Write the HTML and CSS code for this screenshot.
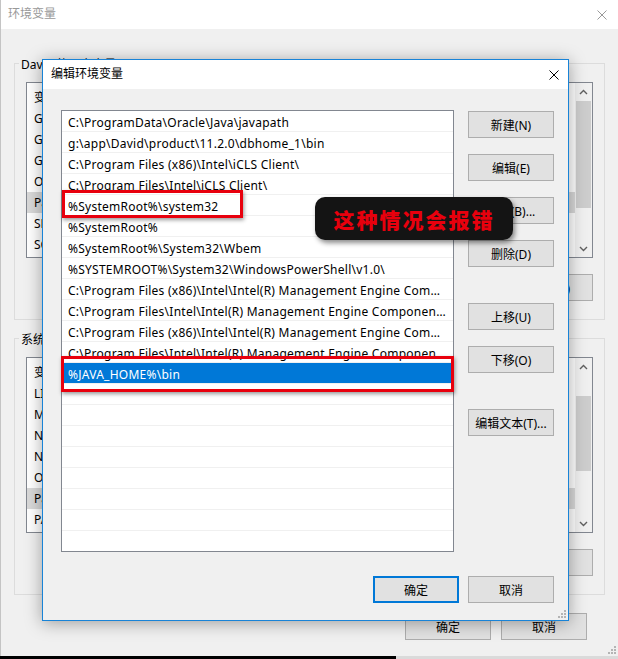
FILE: index.html
```html
<!DOCTYPE html>
<html lang="zh-CN">
<head>
    <meta charset="UTF-8">
    <title>环境变量</title>
    <link rel="stylesheet" href="styles.css">
</head>
<body>
    <div class="desktop">
        <!-- background window: 环境变量 -->
        <div class="window">
            <div class="titlebar inactive">
                <span class="title">环境变量</span>
                <svg class="close-icon" viewBox="0 0 10 10"><path d="M0.5 0.5L9.5 9.5M9.5 0.5L0.5 9.5" stroke="#999" stroke-width="1"/></svg>
            </div>
            <div class="window-body">
                <fieldset class="group">
                    <legend>David 的用户变量(U)</legend>
                    <div class="varlist">
                        <div class="var-rows">
                            <div class="var-row"><span class="var-name">变量</span><span>值</span></div>
                            <div class="var-row"><span class="var-name">GOPATH</span><span>D:\go\work</span></div>
                            <div class="var-row"><span class="var-name">GOROOT</span><span>D:\go</span></div>
                            <div class="var-row"><span class="var-name">GRADLE_HOME</span><span>D:\gradle</span></div>
                            <div class="var-row"><span class="var-name">OneDrive</span><span>C:\Users\David\OneDrive</span></div>
                            <div class="var-row selected"><span class="var-name">Path</span><span>%USERPROFILE%\AppData\Local\Microsoft\WindowsApps;</span></div>
                            <div class="var-row"><span class="var-name">SBT_HOME</span><span>D:\sbt</span></div>
                            <div class="var-row"><span class="var-name">SCALA_HOME</span><span>D:\scala</span></div>
                        </div>
                        <div class="scrollbar">
                            <div class="scroll-arrow"><svg viewBox="0 0 9 6"><path d="M1 5L4.5 1.5L8 5" fill="none" stroke="#606060" stroke-width="1.4"/></svg></div>
                            <div class="scroll-track"><div class="scroll-thumb" style="height: 107px"></div></div>
                            <div class="scroll-arrow"><svg viewBox="0 0 9 6"><path d="M1 1L4.5 4.5L8 1" fill="none" stroke="#606060" stroke-width="1.4"/></svg></div>
                        </div>
                    </div>
                    <div class="group-buttons">
                        <button class="btn">新建(N)...</button>
                        <button class="btn">编辑(E)...</button>
                        <button class="btn">删除(D)</button>
                    </div>
                </fieldset>

                <fieldset class="group group-system">
                    <legend>系统变量(S)</legend>
                    <div class="varlist">
                        <div class="var-rows">
                            <div class="var-row"><span class="var-name">变量</span><span>值</span></div>
                            <div class="var-row"><span class="var-name">LIB</span><span>D:\lib</span></div>
                            <div class="var-row"><span class="var-name">MAVEN_HOME</span><span>D:\maven</span></div>
                            <div class="var-row"><span class="var-name">NUMBER_OF_PROCESSORS</span><span>4</span></div>
                            <div class="var-row"><span class="var-name">NVM_HOME</span><span>D:\nvm</span></div>
                            <div class="var-row"><span class="var-name">OS</span><span>Windows_NT</span></div>
                            <div class="var-row selected"><span class="var-name">Path</span><span>C:\ProgramData\Oracle\Java\javapath;</span></div>
                            <div class="var-row"><span class="var-name">PATHEXT</span><span>.COM;.EXE;.BAT;.CMD</span></div>
                        </div>
                        <div class="scrollbar">
                            <div class="scroll-arrow"><svg viewBox="0 0 9 6"><path d="M1 5L4.5 1.5L8 5" fill="none" stroke="#606060" stroke-width="1.4"/></svg></div>
                            <div class="scroll-track"><div class="scroll-thumb" style="height: 75px; margin-top: 20px"></div></div>
                            <div class="scroll-arrow"><svg viewBox="0 0 9 6"><path d="M1 1L4.5 4.5L8 1" fill="none" stroke="#606060" stroke-width="1.4"/></svg></div>
                        </div>
                    </div>
                    <div class="group-buttons">
                        <button class="btn">新建(W)...</button>
                        <button class="btn">编辑(I)...</button>
                        <button class="btn">删除(L)</button>
                    </div>
                </fieldset>

                <div class="window-footer">
                    <button class="btn">确定</button>
                    <button class="btn">取消</button>
                </div>
            </div>
            <svg class="grip window-grip" viewBox="0 0 8 8"><path d="M6 0h2v2H6zM3 3h2v2H3zM6 3h2v2H6zM0 6h2v2H0zM3 6h2v2H3zM6 6h2v2H6z" fill="#b4b4b4"/></svg>
        </div>

        <!-- dialog: 编辑环境变量 -->
        <div class="dialog">
            <div class="titlebar">
                <span class="title">编辑环境变量</span>
                <svg class="close-icon" viewBox="0 0 10 10"><path d="M0.5 0.5L9.5 9.5M9.5 0.5L0.5 9.5" stroke="#000" stroke-width="1"/></svg>
            </div>
            <div class="dialog-body">
                <div class="path-list">
                    <div class="path-row">C:\ProgramData\Oracle\Java\javapath</div>
                    <div class="path-row">g:\app\David\product\11.2.0\dbhome_1\bin</div>
                    <div class="path-row">C:\Program Files (x86)\Intel\iCLS Client\</div>
                    <div class="path-row">C:\Program Files\Intel\iCLS Client\</div>
                    <div class="path-row">%SystemRoot%\system32</div>
                    <div class="path-row">%SystemRoot%</div>
                    <div class="path-row">%SystemRoot%\System32\Wbem</div>
                    <div class="path-row">%SYSTEMROOT%\System32\WindowsPowerShell\v1.0\</div>
                    <div class="path-row">C:\Program Files (x86)\Intel\Intel(R) Management Engine Components\DAL</div>
                    <div class="path-row">C:\Program Files\Intel\Intel(R) Management Engine Components\DAL</div>
                    <div class="path-row">C:\Program Files (x86)\Intel\Intel(R) Management Engine Components\IPT</div>
                    <div class="path-row">C:\Program Files\Intel\Intel(R) Management Engine Components\IPT</div>
                    <div class="path-row selected">%JAVA_HOME%\bin</div>
                    <div class="path-row"></div>
                    <div class="path-row"></div>
                    <div class="path-row"></div>
                    <div class="path-row"></div>
                    <div class="path-row"></div>
                    <div class="path-row"></div>
                    <div class="path-row"></div>
                    <div class="path-row"></div>
                    <div class="path-row"></div>
                </div>
                <div class="side-buttons">
                    <div class="button-group">
                        <button class="btn">新建(N)</button>
                        <button class="btn">编辑(E)</button>
                        <button class="btn">浏览(B)...</button>
                        <button class="btn">删除(D)</button>
                    </div>
                    <div class="button-group">
                        <button class="btn">上移(U)</button>
                        <button class="btn">下移(O)</button>
                    </div>
                    <div class="button-group">
                        <button class="btn">编辑文本(T)...</button>
                    </div>
                </div>
                <div class="dialog-footer">
                    <button class="btn btn-default">确定</button>
                    <button class="btn">取消</button>
                </div>
            </div>
            <svg class="grip dialog-grip" viewBox="0 0 8 8"><path d="M6 0h2v2H6zM3 3h2v2H3zM6 3h2v2H6zM0 6h2v2H0zM3 6h2v2H3zM6 6h2v2H6z" fill="#b4b4b4"/></svg>
        </div>

        <!-- annotations -->
        <div class="mark mark-system32"></div>
        <div class="mark mark-java"></div>
        <div class="callout">这种情况会报错</div>
    </div>
</body>
</html>
```

FILE: styles.css
```css
* {
    box-sizing: border-box;
}
body {
    margin: 0;
    font-family: "Noto Sans", "Noto Sans CJK SC", sans-serif;
    font-size: 12px;
    color: #000;
}
.desktop {
    position: relative;
    width: 618px;
    height: 659px;
    overflow: hidden;
    background: linear-gradient(to right, #000 396px, #dadada 396px);
}

/* windows */
.window {
    position: relative;
    height: 656px;
    background-color: #f0f0f0;
    border-left: 1px solid #c4c4c4;
    display: flex;
    flex-direction: column;
}
.titlebar {
    height: 29px;
    flex-shrink: 0;
    background-color: white;
    display: flex;
    align-items: center;
    justify-content: space-between;
    padding: 0 11px 0 7px;
}
.titlebar.inactive {
    color: #999;
}
.title {
    margin-bottom: 4px;
}
.close-icon {
    width: 10px;
    height: 10px;
}
.window-body {
    flex: 1;
    padding: 24px 13px 0 13px;
    display: flex;
    flex-direction: column;
}
.group {
    margin: 0;
    padding: 9px 11px 18px;
    border: 1px solid #dcdcdc;
    min-width: 0;
}
.group legend {
    padding: 4px 2px 0;
    margin-left: -7px;
    line-height: 16px;
}
.group-system {
    margin-top: 8px;
}
.varlist {
    height: 176px;
    border: 1px solid #828790;
    background-color: white;
    display: flex;
}
.var-rows {
    flex: 1;
    padding-top: 4px;
    overflow: hidden;
}
.var-row {
    height: 21px;
    line-height: 21px;
    padding-left: 7px;
    white-space: nowrap;
    display: flex;
}
.var-row.selected {
    background-color: #d9d9d9;
}
.var-name {
    width: 150px;
}
.scrollbar {
    width: 17px;
    background-color: #f0f0f0;
    display: flex;
    flex-direction: column;
}
.scroll-arrow {
    height: 17px;
    display: flex;
    align-items: center;
    justify-content: center;
}
.scroll-arrow svg {
    width: 9px;
    height: 6px;
}
.scroll-track {
    flex: 1;
    padding: 1px 1px 0;
}
.scroll-thumb {
    background-color: #cdcdcd;
}
.group-buttons {
    display: flex;
    justify-content: flex-end;
    gap: 10px;
    margin-top: 16px;
}
.window-footer {
    display: flex;
    justify-content: flex-end;
    gap: 10px;
    margin-top: 18px;
    padding-right: 18px;
}
.btn {
    width: 86px;
    height: 27px;
    padding: 0;
    background-color: #e1e1e1;
    border: 1px solid #adadad;
    font: inherit;
    color: #000;
}
.btn-default {
    border: 2px solid #0078d7;
}
.grip {
    position: absolute;
    width: 8px;
    height: 8px;
}
.window-grip {
    right: 2px;
    bottom: 2px;
}

/* dialog */
.dialog {
    position: absolute;
    z-index: 1;
    left: 42px;
    top: 59px;
    width: 527px;
    height: 562px;
    border: 1px solid #1883d7;
    background-color: #f0f0f0;
    box-shadow: 0 2px 16px rgba(0, 0, 0, 0.35);
    display: flex;
    flex-direction: column;
}
.dialog .titlebar {
    padding: 0 9px 0 8px;
}
.dialog-body {
    flex: 1;
    display: grid;
    grid-template-columns: 393px 86px;
    grid-template-rows: 442px 27px;
    column-gap: 14px;
    row-gap: 24px;
    padding: 21px 14px 17px 18px;
}
.path-list {
    border: 1px solid #828790;
    background-color: white;
    overflow: hidden;
}
.path-row {
    height: 21px;
    line-height: 20px;
    padding: 2px 6px 0;
    border-bottom: 1px solid #f0f0f0;
    letter-spacing: 0.25px;
    white-space: nowrap;
    overflow: hidden;
    text-overflow: ellipsis;
}
.path-row.selected {
    background-color: #0078d7;
    color: white;
}
.side-buttons {
    padding-top: 1px;
    display: flex;
    flex-direction: column;
    gap: 36px;
}
.button-group {
    display: flex;
    flex-direction: column;
    gap: 16px;
}
.dialog-footer {
    grid-column: 1 / 3;
    display: flex;
    justify-content: flex-end;
    gap: 9px;
}
.dialog-grip {
    right: 2px;
    bottom: 2px;
}

/* annotations */
.mark {
    position: absolute;
    z-index: 2;
    border: 3px solid #e8000d;
    box-shadow: 1px 2px 4px rgba(0, 0, 0, 0.4);
}
.mark-system32 {
    left: 62px;
    top: 190px;
    width: 181px;
    height: 28px;
}
.mark-java {
    left: 61px;
    top: 356px;
    width: 393px;
    height: 36px;
}
.callout {
    position: absolute;
    z-index: 2;
    left: 315px;
    top: 197px;
    width: 198px;
    height: 43px;
    border-radius: 10px;
    background-color: #141414;
    box-shadow: 2px 3px 5px rgba(0, 0, 0, 0.45);
    color: #e8000d;
    font-family: "Noto Sans CJK SC", sans-serif;
    font-size: 21px;
    font-weight: 900;
    letter-spacing: 2px;
    display: flex;
    align-items: center;
    justify-content: center;
}
```
